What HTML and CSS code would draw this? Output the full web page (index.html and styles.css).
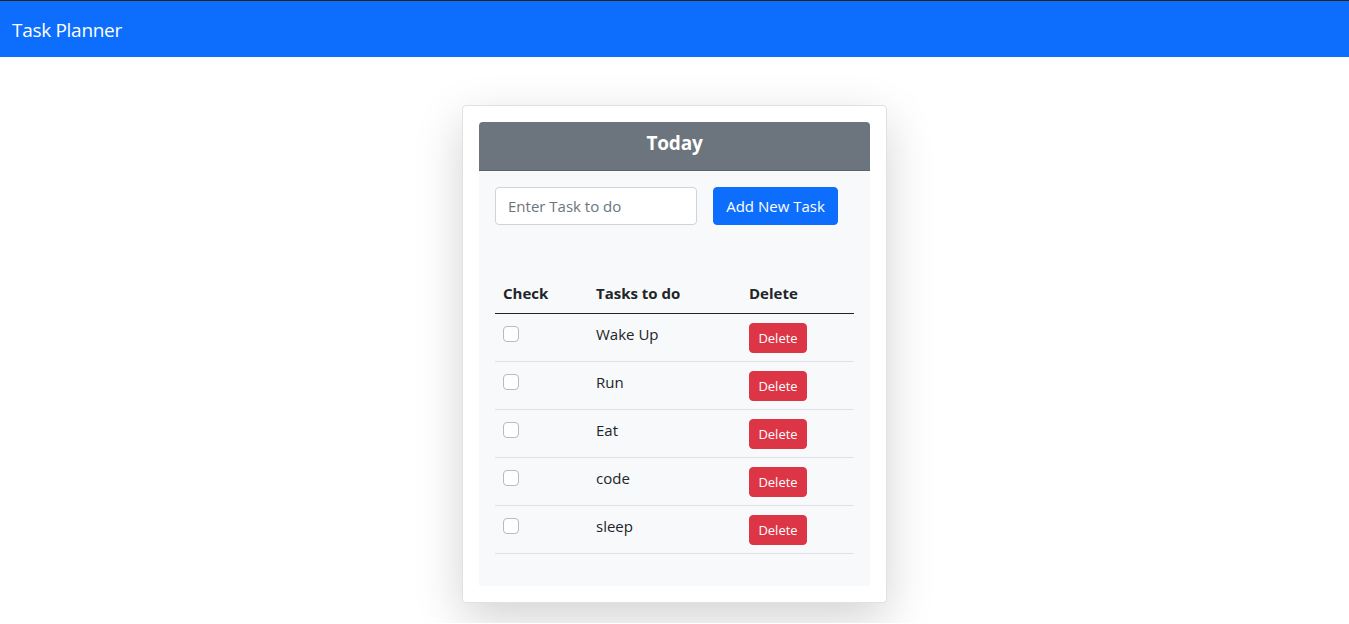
FILE: index.html
```html
<!DOCTYPE html>
<html lang="en">
<head>
<meta charset="utf-8">
<title>Task Planner</title>
<link rel="stylesheet" href="styles.css">
</head>
<body>
<nav class="navbar">
  <span class="brand">Task Planner</span>
</nav>
<main class="page">
  <section class="card">
    <div class="panel">
      <h2 class="panel-title">Today</h2>
      <div class="panel-body">
        <div class="add-row">
          <input class="task-input" type="text" placeholder="Enter Task to do">
          <button class="btn btn-primary">Add New Task</button>
        </div>
        <table class="tasks">
          <thead>
            <tr><th class="c1">Check</th><th class="c2">Tasks to do</th><th class="c3">Delete</th></tr>
          </thead>
          <tbody>
            <tr><td><span class="check"></span></td><td>Wake Up</td><td><button class="btn btn-danger">Delete</button></td></tr>
            <tr><td><span class="check"></span></td><td>Run</td><td><button class="btn btn-danger">Delete</button></td></tr>
            <tr><td><span class="check"></span></td><td>Eat</td><td><button class="btn btn-danger">Delete</button></td></tr>
            <tr><td><span class="check"></span></td><td>code</td><td><button class="btn btn-danger">Delete</button></td></tr>
            <tr><td><span class="check"></span></td><td>sleep</td><td><button class="btn btn-danger">Delete</button></td></tr>
          </tbody>
        </table>
      </div>
    </div>
  </section>
</main>
</body>
</html>
```
FILE: styles.css
```css
* { box-sizing: border-box; }
html, body { margin: 0; }
body {
  font-family: "Open Sans", "Noto Sans", sans-serif;
  font-size: 16px;
  line-height: 1.5;
  color: #212529;
  background: #fff;
}
.navbar {
  background: #0d6efd;
  border-top: 1px solid #222;
  height: 57px;
  display: flex;
  align-items: center;
  padding: 2px 12px 0;
}
.brand {
  color: #fff;
  font-size: 19px;
  letter-spacing: -0.3px;
}
.page {
  display: flex;
  justify-content: center;
  padding: 48px 0 20px;
}
.card {
  width: 425px;
  background: #fff;
  border: 1px solid #dee2e6;
  border-radius: 4px;
  box-shadow: 0 16px 48px rgba(0,0,0,.175);
  padding: 16px;
}
.panel {
  background: #f8f9fa;
  border-radius: 4px 4px 0 0;
  padding-bottom: 16px;
}
.panel-title {
  margin: 0;
  height: 49px;
  padding-bottom: 5px;
  background: #6c757d;
  border-bottom: 1px solid #5c646b;
  border-radius: 4px 4px 0 0;
  color: #fff;
  font-size: 19px;
  font-weight: 700;
  display: flex;
  align-items: center;
  justify-content: center;
  letter-spacing: -0.2px;
}
.panel-body {
  padding: 16px 16px 0;
}
.add-row {
  display: flex;
  gap: 16px;
}
.task-input {
  width: 202px;
  height: 38px;
  border: 1px solid #ced4da;
  border-radius: 4px;
  padding: 6px 12px;
  font: inherit;
  font-size: 15px;
  color: #212529;
  background: #fff;
}
.task-input::placeholder { color: #6c757d; }
.btn {
  border: 1px solid transparent;
  border-radius: 4px;
  color: #fff;
  font-family: inherit;
  cursor: pointer;
}
.btn-primary {
  background: #0d6efd;
  border-color: #0d6efd;
  width: 125px;
  height: 38px;
  font-size: 15px;
  padding: 0;
}
.btn-danger {
  background: #dc3545;
  border-color: #dc3545;
  width: 58px;
  height: 30px;
  font-size: 13px;
  padding: 0;
  margin-top: 1px;
}
.tasks {
  width: 359px;
  margin-top: 48px;
  margin-bottom: 16px;
  border-collapse: collapse;
  font-size: 15px;
}
.tasks th {
  text-align: left;
  font-weight: 700;
  padding: 8px 8px 7px;
  height: 40px;
  border-bottom: 1px solid #212529;
}
.tasks th.c1 { width: 93px; }
.tasks th.c2 { width: 153px; }
.tasks td {
  padding: 9px 8px 7px;
  vertical-align: top;
  height: 48px;
  border-bottom: 1px solid #dee2e6;
}
.tasks td:first-child { padding-top: 8px; }
.tasks td:last-child { padding-top: 8px; }
.check {
  display: block;
  width: 16px;
  height: 16px;
  margin-top: 4px;
  border: 1px solid #b8bcc0;
  border-radius: 4px;
  background: #fff;
}
```
